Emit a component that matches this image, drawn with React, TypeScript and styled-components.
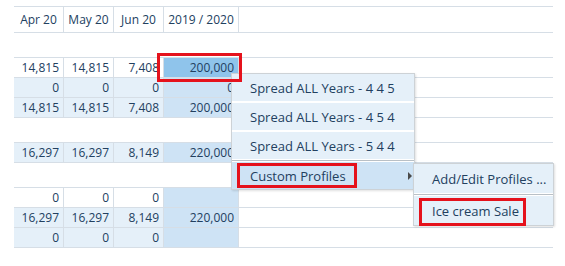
import React from "react";
import styled, { createGlobalStyle } from "styled-components";

const Global = createGlobalStyle`
  html, body { margin: 0; padding: 0; background: #ffffff; }
  body { font-family: "Open Sans", "Noto Sans", sans-serif; }
`;

const LINE = "#d6dee6";
const TEXT = "#22405f";

const Page = styled.div`
  position: relative;
  width: 565px;
  height: 266px;
  overflow: hidden;
`;

const Grid = styled.div`
  margin: 6px 0 0 14px;
  width: 539px;
  display: grid;
  grid-template-columns: 50px 50px 50px 75px 1fr;
`;

const HeadCell = styled.div<{ $last?: boolean }>`
  box-sizing: border-box;
  height: 27px;
  border-top: 1px solid ${LINE};
  border-bottom: 1px solid ${LINE};
  border-right: ${(p) => (p.$last ? "none" : `1px solid ${LINE}`)};
  display: flex;
  align-items: center;
  justify-content: center;
  font-size: 12px;
  color: ${TEXT};
`;

const Spacer = styled.div`
  grid-column: 1 / -1;
  box-sizing: border-box;
  height: 25px;
  border-bottom: 1px solid ${LINE};
`;

type Tone = "white" | "light" | "mid" | "sel";
const tones: Record<Tone, string> = {
  white: "#ffffff",
  light: "#e5f0f9",
  mid: "#cee3f5",
  sel: "#8fc4eb",
};

const Cell = styled.div<{ $tone: Tone; $last?: boolean }>`
  box-sizing: border-box;
  height: 20px;
  border-bottom: 1px solid ${LINE};
  border-right: ${(p) => (p.$last ? "none" : `1px solid ${LINE}`)};
  background: ${(p) => tones[p.$tone]};
  display: flex;
  align-items: center;
  justify-content: flex-end;
  padding-right: 4px;
  font-size: 12px;
  color: ${TEXT};
`;

const Menu = styled.div<{ $left: number; $top: number; $width: number }>`
  position: absolute;
  left: ${(p) => p.$left}px;
  top: ${(p) => p.$top}px;
  width: ${(p) => p.$width}px;
  box-sizing: border-box;
  background: #ffffff;
  border: 1px solid #cdd2d6;
  box-shadow: 1px 1px 2px rgba(0, 0, 0, 0.12);
  display: flex;
  flex-direction: column;
`;

const Item = styled.div<{ $hover?: boolean; $h?: number; $gap?: number }>`
  position: relative;
  height: ${(p) => p.$h ?? 27}px;
  margin-bottom: ${(p) => p.$gap ?? 2}px;
  background: ${(p) => (p.$hover ? "#cee3f5" : "#e5f0f9")};
  display: flex;
  align-items: center;
  padding-left: 18px;
  font-size: 13px;
  color: ${TEXT};
  white-space: nowrap;
`;

const Sep = styled.div`
  height: 1px;
  background: #b9c0c6;
  margin: 0 0 1px 0;
`;

const Arrow = styled.span`
  position: absolute;
  right: 2px;
  top: 50%;
  margin-top: -4px;
  width: 0;
  height: 0;
  border-top: 4px solid transparent;
  border-bottom: 4px solid transparent;
  border-left: 4px solid #4a4a4a;
`;

const RedBox = styled.div<{ $x: number; $y: number; $w: number; $h: number }>`
  position: absolute;
  left: ${(p) => p.$x}px;
  top: ${(p) => p.$y}px;
  width: ${(p) => p.$w}px;
  height: ${(p) => p.$h}px;
  box-sizing: border-box;
  border: 3px solid #e5121c;
  pointer-events: none;
`;

type Row = { vals: string[]; tones: Tone[] };

const R = (vals: string[], tones: Tone[]): Row => ({ vals, tones });

const blocks: (Row[] | "gap")[] = [
  "gap",
  [
    R(["14,815", "14,815", "7,408", "200,000"], ["white", "white", "white", "sel"]),
    R(["0", "0", "0", "0"], ["light", "light", "light", "mid"]),
    R(["14,815", "14,815", "7,408", "200,000"], ["light", "light", "light", "mid"]),
  ],
  "gap",
  [R(["16,297", "16,297", "8,149", "220,000"], ["light", "light", "light", "mid"])],
  "gap",
  [
    R(["0", "0", "0", ""], ["white", "white", "white", "mid"]),
    R(["16,297", "16,297", "8,149", "220,000"], ["light", "light", "light", "mid"]),
    R(["0", "0", "0", ""], ["light", "light", "light", "mid"]),
  ],
];

export default function App() {
  const headers = ["Apr 20", "May 20", "Jun 20", "2019 / 2020", ""];
  return (
    <Page>
      <Global />
      <Grid>
        {headers.map((h, i) => (
          <HeadCell key={i} $last={i === 4}>
            {h}
          </HeadCell>
        ))}
        {blocks.map((b, bi) =>
          b === "gap" ? (
            <Spacer key={bi} />
          ) : (
            b.map((row, ri) => (
              <React.Fragment key={`${bi}-${ri}`}>
                {row.vals.map((v, ci) => (
                  <Cell key={ci} $tone={row.tones[ci]}>
                    {v}
                  </Cell>
                ))}
                <Cell $tone="white" $last />
              </React.Fragment>
            ))
          )
        )}
      </Grid>

      <Menu $left={231} $top={73} $width={184}>
        <Item>Spread ALL Years - 4 4 5</Item>
        <Item>Spread ALL Years - 4 5 4</Item>
        <Item $gap={1}>Spread ALL Years - 5 4 4</Item>
        <Sep />
        <Item $hover $h={27} $gap={0}>
          Custom Profiles
          <Arrow />
        </Item>
      </Menu>

      <Menu $left={413} $top={163} $width={141}>
        <Item $h={29} $gap={1}>Add/Edit Profiles ...</Item>
        <Sep />
        <Item $h={29} $gap={0}>Ice cream Sale</Item>
      </Menu>

      <RedBox $x={157} $y={53} $w={85} $h={29} />
      <RedBox $x={237} $y={163} $w={120} $h={25} />
      <RedBox $x={419} $y={198} $w={107} $h={28} />
    </Page>
  );
}
